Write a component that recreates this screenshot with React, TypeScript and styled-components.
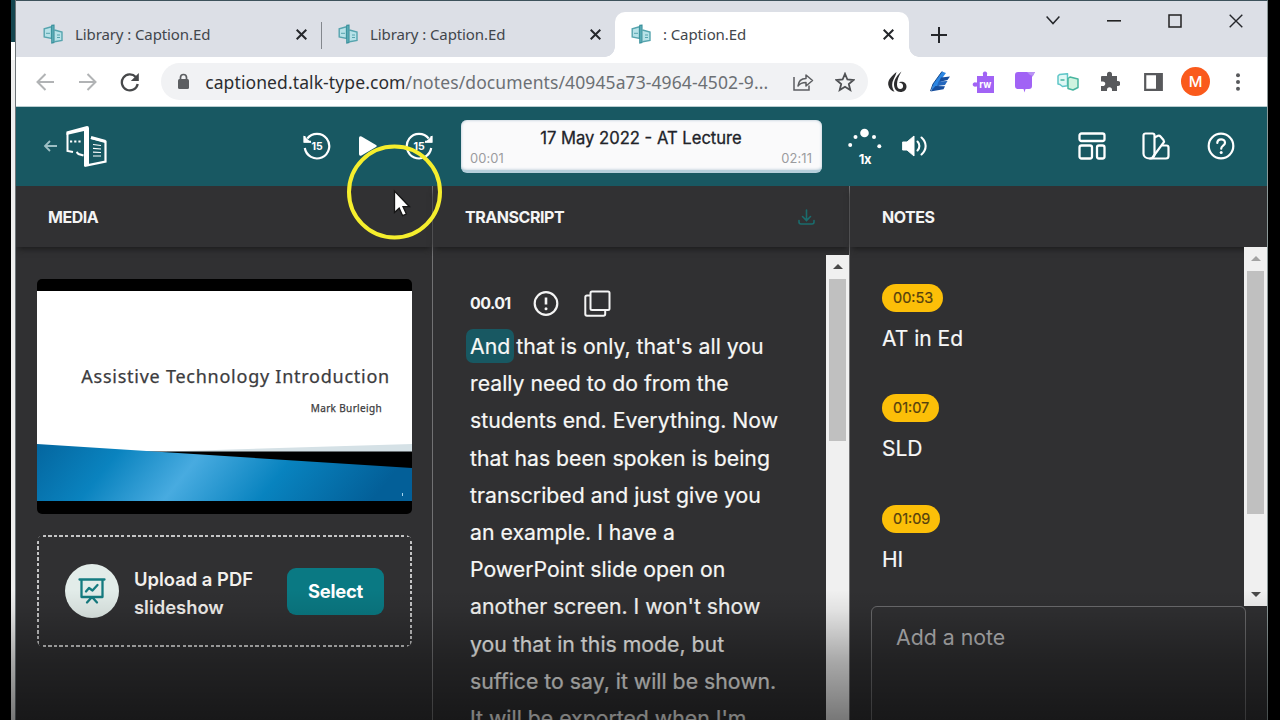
import React from "react";
import styled, { createGlobalStyle } from "styled-components";

const GlobalStyle = createGlobalStyle`
  * { box-sizing: border-box; }
  html, body { margin: 0; padding: 0; background: #000; overflow: hidden; }
  svg { display: block; flex: none; }
`;

const ui = `"Inter", "Liberation Sans", sans-serif`;
const chrome = `"Noto Sans", "Open Sans", sans-serif`;

const Stage = styled.div`
  position: relative;
  display: flex;
  width: 1280px;
  height: 720px;
  overflow: hidden;
  background: #000;
  font-family: ${ui};
`;
const DesktopEdge = styled.div`
  width: 5px;
  margin-left: 11px;
  border-right: 1px solid #6d7478;
  background: linear-gradient(#14454f 0 42px, #fdfdfd 42px 60px, #eeeeee 60px);
`;
const Window = styled.main`
  display: flex;
  flex-direction: column;
  width: 1252px;
  border-top: 1px solid #3d525b;
  border-right: 1px solid #8b9898;
  background: #303032;
`;

/* Browser frame */
const TabStrip = styled.div`
  display: flex;
  height: 56px;
  padding-top: 11px;
  background: #dcdfe6;
`;
const Tab = styled.div<{ $width: number; $active?: boolean; $lead: number }>`
  position: relative;
  display: flex;
  align-items: center;
  width: ${(p) => p.$width}px;
  height: 45px;
  padding: 0 ${(p) => (p.$active ? 15 : 14)}px 1px ${(p) => p.$lead}px;
  border-radius: 10px 10px 0 0;
  background: ${(p) => (p.$active ? "#fff" : "transparent")};
  &::before, &::after {
    content: "";
    display: ${(p) => (p.$active ? "block" : "none")};
    position: absolute;
    bottom: 0;
    width: 10px;
    height: 10px;
  }
  &::before { left: -10px; background: radial-gradient(circle at 0 0, transparent 9.5px, #fff 10px); }
  &::after { right: -10px; background: radial-gradient(circle at 100% 0, transparent 9.5px, #fff 10px); }
`;
const TabTitle = styled.span`
  flex: 1;
  margin-left: 12px;
  font: 400 15px/20px ${chrome};
  letter-spacing: -0.1px;
  white-space: pre;
  color: #42464c;
`;
const TabDivider = styled.i`
  width: 1px;
  height: 27px;
  margin-top: 10px;
  background: #83878d;
`;
const NewTab = styled.div`
  display: flex;
  align-items: center;
  height: 45px;
  margin-left: 22px;
`;
const WindowButtons = styled.div`
  display: flex;
  align-items: center;
  height: 17px;
  margin-left: 75px;
`;
const WindowButton = styled.div`
  display: flex;
  justify-content: center;
  width: 61px;
`;
const Toolbar = styled.div`
  display: flex;
  align-items: center;
  height: 50px;
  padding-left: 8px;
  background: #fff;
  border-bottom: 1px solid #b9cdd0;
`;
const ToolCell = styled.div<{ $w?: number }>`
  display: flex;
  justify-content: center;
  width: ${(p) => p.$w ?? 42.6}px;
`;
const Omnibox = styled.div`
  display: flex;
  align-items: center;
  width: 707px;
  height: 37px;
  margin: 0 8px 0 10px;
  padding: 0 13px 0 16px;
  border-radius: 19px;
  background: #f1f2f4;
`;
const Url = styled.span`
  flex: 1;
  margin-left: 15px;
  font: 400 17.5px/24px ${chrome};
  letter-spacing: 0.1px;
  color: #6c7074;
  white-space: nowrap;
  b { font-weight: 400; color: #2b2d30; }
`;
const OmniActions = styled.div`
  display: flex;
  gap: 21px;
`;
const Avatar = styled.div`
  width: 29px;
  height: 29px;
  border-radius: 50%;
  background: #fa5a1c;
  color: #fff;
  font: 500 15px/29px ${ui};
  text-align: center;
`;

/* Player bar */
const PlayerBar = styled.header`
  display: flex;
  align-items: center;
  height: 79px;
  padding: 0 0 1px 27px;
  background: #185862;
  color: #fff;
`;
const BarGroup = styled.div<{ $lead?: number; $gap: number }>`
  display: flex;
  align-items: center;
  gap: ${(p) => p.$gap}px;
  margin-left: ${(p) => p.$lead ?? 0}px;
`;
const TitleBox = styled.div`
  display: flex;
  flex-direction: column;
  width: 361px;
  height: 53px;
  margin-left: 28px;
  padding: 7px 10px 0 9px;
  border-radius: 6px;
  border-bottom: 3px solid #b5cfdb;
  background: #fafafb;
  box-shadow: inset 0 0 3px #a9bfd0;
`;
const Title = styled.div`
  font-size: 16.6px;
  line-height: 22px;
  text-align: center;
  color: #212329;
  -webkit-text-stroke: 0.3px #212329;
`;
const Times = styled.div`
  display: flex;
  justify-content: space-between;
  font-size: 12.9px;
  line-height: 20px;
  letter-spacing: 0.1px;
  color: #9a9b9e;
`;
const SpeedDial = styled.div`
  display: flex;
  flex-direction: column;
  align-items: center;
  width: 34px;
  height: 36px;
  font-size: 13px;
  line-height: 14px;
  font-weight: 700;
  letter-spacing: -0.4px;
`;

/* Panels */
const Panels = styled.div`
  display: flex;
  flex: 1;
  min-height: 0;
  overflow: hidden;
`;
const Panel = styled.section<{ $last?: boolean }>`
  display: flex;
  flex-direction: column;
  width: 417px;
  border-right: ${(p) => (p.$last ? "none" : "1px solid #717173")};
  background: #303032;
`;
const PanelHeader = styled.div`
  display: flex;
  align-items: center;
  justify-content: space-between;
  height: 61px;
  padding: 0 34px 0 32px;
  background: #313133;
  box-shadow: 0 4px 6px -2px #1b1b1c;
`;
const PanelTitle = styled.h2`
  margin: 0;
  font-size: 16px;
  line-height: 20px;
  font-weight: 700;
  letter-spacing: -0.45px;
  color: #f4f4f4;
`;
const MediaBody = styled.div`
  display: flex;
  flex-direction: column;
  gap: 21px;
  padding: 32px 20px 0 21px;
`;
const Slide = styled.div`
  display: flex;
  flex-direction: column;
  height: 235px;
  border-radius: 5px;
  border-top: 12px solid #000;
  border-bottom: 13px solid #000;
  background: #fff;
  overflow: hidden;
  font-family: ${chrome};
  color: #3c3c3e;
  text-align: right;
  -webkit-text-stroke: 0.25px #3c3c3e;
`;
const SlideTitle = styled.div`
  padding: 72px 22px 0 0;
  font-size: 18px;
  line-height: 26px;
  letter-spacing: 0.75px;
  white-space: nowrap;
`;
const SlideAuthor = styled.div`
  height: 56px;
  padding: 9px 30px 0 0;
  font-size: 10px;
  line-height: 20px;
  letter-spacing: 0.35px;
`;
const dash = "#c4c4c5 0 3.4px, transparent 3.4px 5.6px";
const UploadBox = styled.div`
  display: flex;
  align-items: center;
  height: 112px;
  padding: 0 28px;
  border-radius: 7px;
  background:
    repeating-linear-gradient(90deg, ${dash}) top / 100% 2px no-repeat,
    repeating-linear-gradient(90deg, ${dash}) bottom / 100% 2px no-repeat,
    repeating-linear-gradient(${dash}) left / 2px 100% no-repeat,
    repeating-linear-gradient(${dash}) right / 2px 100% no-repeat;
`;
const UploadIcon = styled.div`
  display: flex;
  align-items: center;
  justify-content: center;
  width: 54px;
  height: 54px;
  border-radius: 50%;
  background: #e2ece9;
`;
const UploadText = styled.div`
  flex: 1;
  margin-left: 15px;
  padding-top: 3px;
  font-size: 18.4px;
  line-height: 28px;
  font-weight: 600;
  letter-spacing: 0;
  color: #f2efec;
`;
const SelectButton = styled.button`
  width: 97px;
  height: 47px;
  padding: 0;
  border: 0;
  border-radius: 9px;
  background: #0a7983;
  color: #fff;
  font: 700 18.4px/47px ${ui};
  letter-spacing: -0.25px;
`;
const TranscriptBody = styled.div`
  display: flex;
  justify-content: space-between;
  flex: 1;
  min-height: 0;
  padding-top: 8px;
`;
const TranscriptText = styled.div`
  padding: 32px 0 0 37px;
`;
const Stamp = styled.div`
  display: flex;
  align-items: center;
  height: 32px;
  font-size: 16px;
  font-weight: 700;
  letter-spacing: -0.6px;
  color: #f4f4f4;
`;
const StampActions = styled.span`
  display: flex;
  gap: 25px;
  margin-left: 22px;
`;
const Speech = styled.p`
  margin: 9px 0 0;
  font-size: 21.25px;
  line-height: 37.2px;
  white-space: nowrap;
  color: #f7f7f5;
  -webkit-text-stroke: 0.2px #f7f7f5;
`;
const Word = styled.mark`
  margin: 0 -4px;
  padding: 4px 4px;
  border-radius: 7px;
  background: #185862;
  color: inherit;
`;
const Scrollbar = styled.div<{ $h?: number }>`
  display: flex;
  flex-direction: column;
  align-items: center;
  width: 23px;
  height: ${(p) => (p.$h ? `${p.$h}px` : "auto")};
  background: #f0f0f0;
`;
const ScrollArrow = styled.i<{ $down?: boolean; $dim?: boolean }>`
  width: 0;
  height: 0;
  margin: ${(p) => (p.$down ? "auto 0 9px" : "9px 0 10px")};
  border: 5px solid transparent;
  ${(p) =>
    p.$down
      ? "border-bottom: 0; border-top-color: #4a4a4a;"
      : `border-top: 0; border-bottom-color: ${p.$dim ? "#a2a2a2" : "#4a4a4a"};`}
`;
const ScrollThumb = styled.i<{ $h: number }>`
  width: 17px;
  height: ${(p) => p.$h}px;
  background: #c0c0c0;
`;
const NotesBody = styled.div`
  display: flex;
  justify-content: space-between;
  height: 359px;
`;
const NoteList = styled.div`
  display: flex;
  flex-direction: column;
  padding: 37px 0 0 32px;
`;
const Note = styled.article`
  display: flex;
  flex: none;
  flex-direction: column;
  align-items: flex-start;
  height: 110.3px;
  font-size: 21px;
  line-height: 26px;
  color: #f7f7f7;
  -webkit-text-stroke: 0.2px #f7f7f7;
`;
const Badge = styled.span`
  height: 28px;
  margin-bottom: 14px;
  padding: 0 10px 0 11px;
  border-radius: 14px;
  background: #fcbf08;
  color: #54400e;
  font-size: 14.5px;
  line-height: 28px;
  -webkit-text-stroke: 0.2px #54400e;
`;
const NoteInput = styled.div`
  flex: 1;
  margin: 0 21px -10px 21px;
  padding: 17px 24px;
  border: 1.5px solid #6a6a6c;
  border-radius: 6px;
  color: #b9b9bb;
  font-size: 21.3px;
  line-height: 26px;
`;

/* Layers drawn over the page */
const BottomFade = styled.div`
  position: absolute;
  inset: 590px 0 0 0;
  background: linear-gradient(rgba(0,0,0,0), rgba(0,0,0,0.06) 15%, rgba(0,0,0,0.3) 55%, rgba(0,0,0,0.5));
  pointer-events: none;
`;
const Pointer = styled.svg`
  position: absolute;
  z-index: 5;
  left: 344px;
  top: 142px;
`;

const Favicon = () => (
  <svg width="20" height="20" viewBox="0 0 20 20" fill="none" stroke="#56a4ae" strokeWidth="1.4">
    <path d="M8.500 2.800 1.200 4.800V13l7.300 1.500Z" fill="#b7e2e8" />
    <path d="M11.500 6 19 8v8.500l-7.500 1.300" fill="#b7e2e8" />
    <path d="M8.800 1.200 11 1v17.500l-2.200.5Z" stroke="#338c98" strokeWidth="1.100" fill="#6dbac4" />
    <path d="M3 9.300h4M14 11h3M14 13.500h3" strokeWidth="1" />
  </svg>
);
const Cross = ({ size = 11, w = 2 }: { size?: number; w?: number }) => (
  <svg width={size} height={size} viewBox={`0 0 ${size} ${size}`} stroke="#25272b" strokeWidth={w}>
    <path d={`M.7.7 ${size - 0.7} ${size - 0.7}M${size - 0.7}.7.7 ${size - 0.7}`} />
  </svg>
);
const Skip = ({ forward }: { forward?: boolean }) => (
  <svg width="28" height="28" viewBox="0 0 28 28" fill="none" stroke="#fff" strokeWidth="2.200">
    <g transform={forward ? "translate(28 0) scale(-1 1)" : undefined}>
      <path d="M4.300 6.500A12.300 12.300 0 1 1 1.800 16" />
      <path d="M.5 3.500v7.200h8Z" fill="#fff" stroke="none" />
      <path d="M1.600 4v5.600h6.400" strokeWidth="1.800" />
    </g>
    <text x="14" y="17.800" textAnchor="middle" fill="#fff" stroke="none" fontFamily="Inter" fontSize="10.500" fontWeight="700">
      15
    </text>
  </svg>
);

const notes = [
  ["00:53", "AT in Ed"],
  ["01:07", "SLD"],
  ["01:09", "HI"],
];
const lines = [
  "really need to do from the",
  "students end. Everything. Now",
  "that has been spoken is being",
  "transcribed and just give you",
  "an example. I have a",
  "PowerPoint slide open on",
  "another screen. I won't show",
  "you that in this mode, but",
  "suffice to say, it will be shown.",
  "It will be exported when I'm",
];

const BrowserFrame = () => (
  <>
    <TabStrip>
      <Tab $width={305} $lead={27}>
        <Favicon />
        <TabTitle>Library : Caption.Ed</TabTitle>
        <Cross />
      </Tab>
      <TabDivider />
      <Tab $width={293} $lead={16}>
        <Favicon />
        <TabTitle>Library : Caption.Ed</TabTitle>
        <Cross />
      </Tab>
      <Tab $width={294} $lead={16} $active>
        <Favicon />
        <TabTitle>: Caption.Ed</TabTitle>
        <Cross />
      </Tab>
      <NewTab>
        <svg width="16" height="16" stroke="#25272b" strokeWidth="2"><path d="M8 0v16M0 8h16" /></svg>
      </NewTab>
      <WindowButtons>
        <WindowButton><svg width="14" height="9" fill="none" stroke="#25272b" strokeWidth="1.500"><path d="m.6.6 6.400 7 6.400-7" /></svg></WindowButton>
        <WindowButton><svg width="14" height="2"><path d="M0 0h14v1.600H0z" fill="#222" /></svg></WindowButton>
        <WindowButton><svg width="14" height="14" fill="none" stroke="#222" strokeWidth="1.500"><path d="M1 1h12v12H1z" /></svg></WindowButton>
        <WindowButton><Cross size={14} w={1.4} /></WindowButton>
      </WindowButtons>
    </TabStrip>
    <Toolbar>
      <ToolCell>
        <svg width="18" height="18" fill="none" stroke="#b1b3b5" strokeWidth="2"><path d="M18 9H1.500M9.500 1 1.500 9l8 8" /></svg>
      </ToolCell>
      <ToolCell>
        <svg width="18" height="18" fill="none" stroke="#b1b3b5" strokeWidth="2"><path d="M0 9h16.500M8.500 1l8 8-8 8" /></svg>
      </ToolCell>
      <ToolCell $w={42}>
        <svg width="20" height="20" fill="none" stroke="#46484a" strokeWidth="2.300"><path d="M15.800 5A8 8 0 1 0 17.700 12" /><path d="M18.800 1v8h-8Z" fill="#46484a" stroke="none" /></svg>
      </ToolCell>
      <Omnibox>
        <svg width="13" height="17" viewBox="0 0 13 17"><rect x="1" y="6" width="11" height="10" rx="1.500" fill="#5c5e61" /><path d="M3.500 7V4.500a3 3 0 0 1 6 0V7" fill="none" stroke="#5c5e61" strokeWidth="1.700" /></svg>
        <Url><b>captioned.talk-type.com</b>/notes/documents/40945a73-4964-4502-9...</Url>
        <OmniActions>
          <svg width="21" height="20" viewBox="0 0 21 20" fill="none" stroke="#5c5e61" strokeWidth="1.500"><path d="M1 5v13h15v-4.500" /><path d="M5 14c.5-5 3-7.500 8-7.500V3l6.500 5.500L13 14v-3.500c-4 0-6 .7-8 3.500Z" strokeLinejoin="round" /></svg>
          <svg width="20" height="20" viewBox="0 0 20 20" fill="none" stroke="#4f5154" strokeWidth="1.800"><path d="m10 1.800 2.400 5.700 6.100.5-4.700 4 1.500 6L10 14.800 4.700 18l1.500-6-4.700-4 6.100-.5Z" /></svg>
        </OmniActions>
      </Omnibox>
      <ToolCell>
        <svg width="19" height="22" viewBox="0 0 19 22" fill="#2d2d2f"><path d="M8.500 1C3 5.500-.5 9.500.3 14 .9 17.500 3.500 20 6.500 20.800 3.800 17 3.400 12.500 5.500 8.500 6.500 6.200 8 4 8.500 1Z" /><path d="M13.500.500C9 4.500 6 8.500 6 13.500c0 4.500 2.800 7.500 6.500 7.500 3.500 0 6-2.200 6-5.500 0-3-2.300-4.800-4.800-4.800-1.500 0-2.400.5-2.900 1.100 2.800-.3 4.300 1.200 4.300 3.200 0 1.900-1.200 3-2.800 3-2.300 0-3.300-2-3.300-4.500C9 9 10.800 5 13.500.500Z" /></svg>
      </ToolCell>
      <ToolCell>
        <svg width="20" height="21" viewBox="0 0 20 21"><path d="m12 .5 4 1.500-3 4-5 11-6.500 2.500L3 13Z" fill="#2b86e3" /><path d="M11 6.500 20 5.500 17.500 9l-8.500 2Z" fill="#164e9e" /><path d="m8.500 10.500 9-.5-2.500 4-8 1Z" fill="#2467bd" /><path d="m5.500 15 9.500.3-1.500 3-13 2.200Z" fill="#164e9e" /><path d="m12 .5-9 12.500L.5 20" stroke="#174a8c" fill="none" /></svg>
      </ToolCell>
      <ToolCell>
        <svg width="22" height="22" viewBox="0 0 22 22" fill="#a163f5"><path d="M5 5h6V3.700a2.200 2.200 0 1 1 4 0V5h7v17H5v-6.500H3.800A2.200 2.200 0 1 1 3.800 11.500H5Z" /><text x="13.300" y="17" textAnchor="middle" fontFamily="Inter" fontWeight="700" fontSize="9.500" fill="#fff">rw</text></svg>
      </ToolCell>
      <ToolCell>
        <svg width="20" height="22" viewBox="0 0 20 22" fill="#a163f5"><path d="M3 1h17l-3 5v9a3 3 0 0 1-3 3h-3.500l-1 3.500L8.500 18H3a3 3 0 0 1-3-3V4a3 3 0 0 1 3-3Z" /><path d="m12 1 3 3 3 1 2-4Z" fill="#b993f4" /></svg>
      </ToolCell>
      <ToolCell>
        <svg width="22" height="18" viewBox="0 0 22 18" fill="none" strokeWidth="1.500" strokeLinejoin="round"><path d="m2.500 1.500 8-.8v12l-5 .8-2.500-2-2-.5V3Z" stroke="#5fc6c8" fill="#e0f8f5" /><path d="M11 5.500 13 4l8 2v8.500L16 17l-5-1.500Z" stroke="#48b59f" fill="#cff3df" /><path d="M3.500 7h4" stroke="#48b59f" /></svg>
      </ToolCell>
      <ToolCell>
        <svg width="20" height="21" viewBox="0 0 20 21" fill="#58595c"><path d="M2 5h5V3.200a2.500 2.500 0 1 1 5 0V5h5v5h.8a2.500 2.500 0 1 1 0 5H17v5h-5v-1.200a2.500 2.500 0 1 0-5 0V20H1v-5h1.500a2.300 2.300 0 1 0 0-4.500H1V6a1 1 0 0 1 1-1Z" /></svg>
      </ToolCell>
      <ToolCell>
        <svg width="19" height="18"><path d="M1.200 1.200h16.600v15.600H1.200z" fill="#fff" stroke="#58595c" strokeWidth="2.200" /><path d="M12 1h6v16h-6z" fill="#58595c" /></svg>
      </ToolCell>
      <ToolCell><Avatar>M</Avatar></ToolCell>
      <ToolCell>
        <svg width="4" height="18" fill="#58595c"><circle cx="2" cy="2.200" r="2" /><circle cx="2" cy="9" r="2" /><circle cx="2" cy="15.800" r="2" /></svg>
      </ToolCell>
    </Toolbar>
  </>
);

const Player = () => (
  <PlayerBar>
    <BarGroup $gap={9}>
      <svg width="14" height="12" fill="none" stroke="#9dbfc4" strokeWidth="1.800"><path d="M14 6H2M7 1 2 6l5 5" /></svg>
      <svg width="41" height="41" viewBox="0 0 41 41" fill="none" stroke="#fff">
        <path d="M1.500 6.500v18.500l5.500 1M10.500 26l2 2 5 1.500" strokeWidth="2" />
        <path d="M.5 5.500 20 .2q3-.7 3 2V38l-5 2.500V5L.5 9Z" fill="#fff" stroke="none" />
        <path d="m18.500 39.800 21-4.300V15.500L25 12" strokeWidth="2.200" />
        <path d="m25 11.500 14.500 4" strokeWidth="3" />
        <path d="M4 15.500h11" strokeWidth="2.200" strokeDasharray="2.200 2" />
        <path d="m27 18.500 8 1M27 22.300l8 .7M27 26.200l8 .3M27 30h8" strokeWidth="1.200" />
      </svg>
    </BarGroup>
    <BarGroup $gap={28} $lead={196}>
      <Skip />
      <svg width="18" height="20" viewBox="0 0 18 20" fill="#fff"><path d="M0 2Q0-.5 2.500.5L17 9q1.500 1 0 2L2.500 19.500Q0 20.500 0 18Z" /></svg>
      <Skip forward />
    </BarGroup>
    <TitleBox>
      <Title>17 May 2022 - AT Lecture</Title>
      <Times><span>00:01</span><span>02:11</span></Times>
    </TitleBox>
    <BarGroup $gap={20} $lead={26}>
      <SpeedDial>
        <svg width="34" height="24" viewBox="0 0 34 24" fill="#fff"><circle cx="16.500" cy="5" r="4.300" /><circle cx="7.500" cy="9" r="2" /><circle cx="26" cy="9" r="2" /><circle cx="2.200" cy="17" r="2" /><circle cx="31.300" cy="18.300" r="2" /></svg>
        <span>1x</span>
      </SpeedDial>
      <svg width="26" height="22" viewBox="0 0 26 22" fill="none" stroke="#fff" strokeWidth="2.100" strokeLinecap="round"><path d="M1 7h4l7-6v20l-7-6H1Z" fill="#fff" stroke="#fff" strokeWidth="1" strokeLinejoin="round" /><path d="M15.500 6.500c2.500 2.500 2.500 6.500 0 9M19.500 2.500c5.500 5 5.500 12 0 17" /></svg>
    </BarGroup>
    <BarGroup $gap={36.5} $lead={149.5}>
      <svg width="28" height="28" fill="none" stroke="#fff" strokeWidth="2.300"><rect x="1.500" y="1.500" width="25" height="7.500" rx="2" /><rect x="1.500" y="13.500" width="12.500" height="13" rx="2" /><rect x="19" y="13.500" width="7.500" height="13" rx="2" /></svg>
      <svg width="28" height="28" fill="none" stroke="#fff" strokeWidth="2.200" strokeLinejoin="round"><path d="M3.500 1.500h7a2 2 0 0 1 2 2v18.200c0 3-2 4.800-5 4.800s-6-1.800-6-4.800V3.500a2 2 0 0 1 2-2Z" /><path d="m12.500 5.500 3.500-1.700q1.500-.5 2.500.7l3 3.500q1 1.500 0 2.700L10.500 25.500M19 13.500h5.500q2 0 2 2V24q0 2.500-2.500 2.500H7.500" /></svg>
      <svg width="28" height="28" fill="none" stroke="#fff" strokeWidth="2.200"><circle cx="14" cy="14" r="12.300" /><path d="M10.300 11c0-5 7.700-4.700 7.700-.3 0 3-3.800 3-3.800 6" strokeLinecap="round" /><circle cx="14.200" cy="20.500" r="1.500" fill="#fff" stroke="none" /></svg>
    </BarGroup>
  </PlayerBar>
);

const MediaPanel = () => (
  <Panel>
    <PanelHeader><PanelTitle>MEDIA</PanelTitle></PanelHeader>
    <MediaBody>
      <Slide>
        <SlideTitle>Assistive Technology Introduction</SlideTitle>
        <SlideAuthor>Mark Burleigh</SlideAuthor>
        <svg width="375" height="57" viewBox="0 0 375 57">
          <defs>
            <linearGradient id="wave" x1="0" y1="0" x2="1" y2="0.120">
              <stop offset="0" stopColor="#04669f" />
              <stop offset="0.230" stopColor="#0a83bf" />
              <stop offset="0.450" stopColor="#48abe0" />
              <stop offset="0.700" stopColor="#0883bf" />
              <stop offset="1" stopColor="#035f98" />
            </linearGradient>
          </defs>
          <path d="M130 7.500 375 0v9H130Z" fill="#d5e1e6" />
          <path d="M110 7.500h265v20H110Z" fill="#000" />
          <path d="M0 0 375 24V57H0Z" fill="url(#wave)" />
          <path d="M365.500 49v3" stroke="#a8d6f0" />
        </svg>
      </Slide>
      <UploadBox>
        <UploadIcon>
          <svg width="28" height="28" fill="none" stroke="#147b80" strokeWidth="2.300" strokeLinecap="round" strokeLinejoin="round"><path d="M1.500 2.500h25M3.500 3v17h21V3M14 20l-5 5.500M14 20l5 5.500M8 14.500l3-3.500 3.500 2.500 5-5.500" /></svg>
        </UploadIcon>
        <UploadText>Upload a PDF<br />slideshow</UploadText>
        <SelectButton>Select</SelectButton>
      </UploadBox>
    </MediaBody>
  </Panel>
);

const TranscriptPanel = () => (
  <Panel>
    <PanelHeader>
      <PanelTitle>TRANSCRIPT</PanelTitle>
      <svg width="17" height="17" fill="none" stroke="#1a6c6d" strokeWidth="1.600" strokeLinecap="round"><path d="M8.500 2v10M4.500 8.500l4 4 4-4M1 12.500v1.500q0 2 2 2h11q2 0 2-2v-1.500" /></svg>
    </PanelHeader>
    <TranscriptBody>
      <TranscriptText>
        <Stamp>
          00.01
          <StampActions>
            <svg width="26" height="26" fill="none" stroke="#f4f4f4" strokeWidth="2.200"><circle cx="13" cy="13.500" r="11.300" /><path d="M13 7.500v7" strokeWidth="2.600" /><circle cx="13" cy="18.800" r="1.500" fill="#f4f4f4" stroke="none" /></svg>
            <svg width="27" height="27" fill="none" stroke="#f4f4f4" strokeWidth="2"><rect x="6.500" y="1.500" width="19" height="18.500" rx="1.500" /><path d="M6 5.500H3q-1.700 0-1.700 1.700V24q0 1.700 1.700 1.700h16.500q1.700 0 1.700-1.700v-3.500" /></svg>
          </StampActions>
        </Stamp>
        <Speech>
          <Word>And</Word> that is only, that's all you
          {lines.map((line) => (
            <React.Fragment key={line}><br />{line}</React.Fragment>
          ))}
        </Speech>
      </TranscriptText>
      <Scrollbar>
        <ScrollArrow />
        <ScrollThumb $h={162} />
      </Scrollbar>
    </TranscriptBody>
  </Panel>
);

const NotesPanel = () => (
  <Panel $last>
    <PanelHeader><PanelTitle>NOTES</PanelTitle></PanelHeader>
    <NotesBody>
      <NoteList>
        {notes.map(([time, text]) => (
          <Note key={time}><Badge>{time}</Badge>{text}</Note>
        ))}
      </NoteList>
      <Scrollbar $h={359}>
        <ScrollArrow $dim />
        <ScrollThumb $h={243} />
        <ScrollArrow $down />
      </Scrollbar>
    </NotesBody>
    <NoteInput>Add a note</NoteInput>
  </Panel>
);

export default function App() {
  return (
    <>
      <GlobalStyle />
      <Stage>
        <DesktopEdge />
        <Window>
          <BrowserFrame />
          <Player />
          <Panels>
            <MediaPanel />
            <TranscriptPanel />
            <NotesPanel />
          </Panels>
        </Window>
        <BottomFade />
        <Pointer width="100" height="100" fill="none">
          <circle cx="50.500" cy="50" r="45.500" stroke="#f5ee2d" strokeWidth="4" />
          <path d="M50.500 49v21.500l4.700-4.300 3.400 7.500 3.800-1.700-3.400-7.300h6.500Z" fill="#fff" stroke="#161616" strokeWidth="1.300" />
        </Pointer>
      </Stage>
    </>
  );
}
